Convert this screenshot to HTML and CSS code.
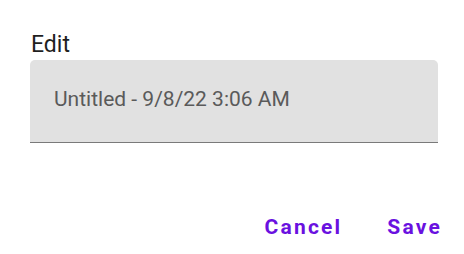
FILE: index.html
```html
<!DOCTYPE html>
<html>
<head>
<meta charset="utf-8">
<link rel="stylesheet" href="styles.css">
</head>
<body>
<div class="dialog">
  <div class="title">Edit</div>
  <div class="field">
    <span class="value">Untitled - 9/8/22 3:06 AM</span>
  </div>
  <div class="actions">
    <span class="btn">Cancel</span>
    <span class="btn">Save</span>
  </div>
</div>
</body>
</html>
```
FILE: styles.css
```css
html, body {
  margin: 0;
  padding: 0;
  background: #ffffff;
}
body {
  width: 464px;
  height: 254px;
  overflow: hidden;
  font-family: Roboto, "Noto Sans", sans-serif;
}
.dialog {
  padding: 31px 22px 0 30px;
  display: flex;
  flex-direction: column;
}
.title {
  font-size: 23px;
  line-height: 27px;
  color: #1f1f1f;
  margin-left: 1px;
}
.field {
  margin-top: 2px;
  margin-right: 4px;
  background: #e1e1e1;
  border-radius: 5px 5px 0 0;
  border-bottom: 1px solid #7a7a7a;
  display: flex;
  align-items: center;
  padding-left: 24px;
  padding-bottom: 4px;
  box-sizing: border-box;
  height: 83px;
}
.value {
  font-size: 21px;
  color: #5a5a5a;
}
.actions {
  display: flex;
  justify-content: flex-end;
  gap: 45px;
  margin-top: 72px;
}
.btn {
  font-size: 21px;
  font-weight: 700;
  letter-spacing: 2.2px;
  color: #6a11e0;
}
```
